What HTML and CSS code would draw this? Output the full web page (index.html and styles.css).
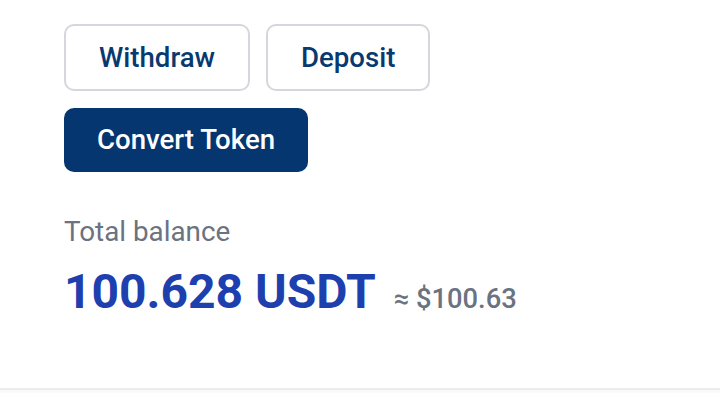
FILE: index.html
```html
<!DOCTYPE html>
<html>
<head>
<meta charset="utf-8">
<link rel="stylesheet" href="styles.css">
</head>
<body>
<div class="page">
  <section class="wallet">
    <div class="actions">
      <div class="row">
        <button class="btn btn-outline">Withdraw</button>
        <button class="btn btn-outline">Deposit</button>
      </div>
      <div class="row">
        <button class="btn btn-solid">Convert Token</button>
      </div>
    </div>
    <div class="balance">
      <div class="label">Total balance</div>
      <div class="amount-row">
        <span class="amount">100.628 USDT</span>
        <span class="approx">≈ $100.63</span>
      </div>
    </div>
  </section>
  <div class="divider"></div>
</div>
</body>
</html>
```
FILE: styles.css
```css
* { box-sizing: border-box; }
html, body { margin: 0; padding: 0; background: #fff; }
body { font-family: Roboto, "Noto Sans", Arial, sans-serif; }
.page { width: 720px; height: 404px; overflow: hidden; }
.wallet { height: 388px; padding: 24px 0 0 64px; }
.actions { display: flex; flex-direction: column; gap: 17px; }
.row { display: flex; gap: 16px; }
.btn {
  font-family: Roboto, Arial, sans-serif;
  font-weight: 500;
  font-size: 27.6px;
  border-radius: 10px;
  cursor: pointer;
  line-height: 1;
}
.btn-outline {
  height: 67px;
  padding: 0 33px;
  background: #fff;
  border: 2px solid #d6d6dc;
  color: #08396f;
}
.btn-solid {
  height: 64px;
  padding: 0 33px;
  background: #053670;
  border: none;
  color: #fff;
}
.balance { margin-top: 45px; }
.label { font-size: 27.8px; color: #6b7280; line-height: 30px; }
.amount-row { display: flex; align-items: baseline; gap: 18px; margin-top: 17px; }
.amount { font-size: 48px; font-weight: 700; color: #1e40af; line-height: 56px; }
.approx { font-size: 27.3px; font-weight: 500; color: #6b7280; }
.divider {
  height: 2px;
  background: #ececec;
  box-shadow: 0 2px 3px rgba(0,0,0,0.05);
}
```
